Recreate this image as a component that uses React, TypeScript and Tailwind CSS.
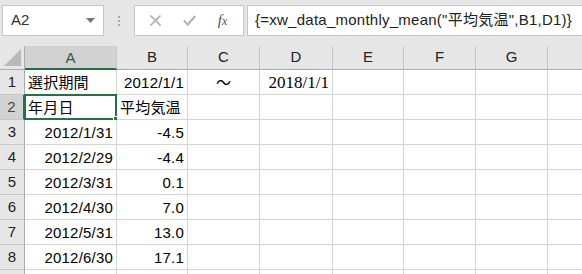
import React from "react";

const cols = [
  { name: "A", w: "w-[92px]" },
  { name: "B", w: "w-[71px]" },
  { name: "C", w: "w-[72px]" },
  { name: "D", w: "w-[73px]" },
  { name: "E", w: "w-[71px]" },
  { name: "F", w: "w-[72px]" },
  { name: "G", w: "w-[72px]" },
  { name: "H", w: "w-[80px]" },
];

type Cell = { text: string; align?: "left" | "right" | "center"; serif?: boolean };

const rows: Cell[][] = [
  [{ text: "選択期間" }, { text: "2012/1/1", align: "right" }, { text: "〜", align: "center" }, { text: "2018/1/1", align: "right", serif: true }],
  [{ text: "年月日" }, { text: "平均気温" }],
  [{ text: "2012/1/31", align: "right" }, { text: "-4.5", align: "right" }],
  [{ text: "2012/2/29", align: "right" }, { text: "-4.4", align: "right" }],
  [{ text: "2012/3/31", align: "right" }, { text: "0.1", align: "right" }],
  [{ text: "2012/4/30", align: "right" }, { text: "7.0", align: "right" }],
  [{ text: "2012/5/31", align: "right" }, { text: "13.0", align: "right" }],
  [{ text: "2012/6/30", align: "right" }, { text: "17.1", align: "right" }],
  [],
];

const font = { fontFamily: '"Liberation Sans", "Noto Sans CJK JP", sans-serif' };

export default function App() {
  return (
    <div className="w-[582px] h-[274px] overflow-hidden bg-[#e6e6e6] text-[15px] text-black" style={font}>
      {/* formula bar */}
      <div className="flex items-start pt-[5px] h-[46px]">
        <div className="ml-[2px] w-[102px] h-[31px] bg-white border border-[#c6c6c6] flex items-center justify-between pl-[8px] pr-[8px]">
          <span className="text-[#333]">A2</span>
          <svg width="9" height="5" viewBox="0 0 9 5">
            <path d="M0 0 H9 L4.5 5 Z" fill="#777" />
          </svg>
        </div>
        <div className="w-[30px] h-[31px] flex flex-col items-center justify-center gap-[2px]">
          <span className="w-[2px] h-[2px] bg-[#a8a8a8]" />
          <span className="w-[2px] h-[2px] bg-[#a8a8a8]" />
          <span className="w-[2px] h-[2px] bg-[#a8a8a8]" />
        </div>
        <div className="w-[110px] h-[31px] bg-white border border-[#c6c6c6] flex items-center">
          <div className="w-[38px] flex justify-center pl-[2px]">
            <svg width="11" height="11" viewBox="0 0 11 11">
              <path d="M0.5 0.5 L10.5 10.5 M10.5 0.5 L0.5 10.5" stroke="#b0b0b0" strokeWidth="1.6" />
            </svg>
          </div>
          <div className="w-[32px] flex justify-center">
            <svg width="13" height="11" viewBox="0 0 13 11">
              <path d="M0.8 5.5 L4.8 9.6 L12.2 1" stroke="#b0b0b0" strokeWidth="2" fill="none" />
            </svg>
          </div>
          <div className="flex-1 flex justify-center pr-[3px]">
            <span className="italic text-[15px] text-[#555]" style={{ fontFamily: '"Liberation Serif", serif' }}>
              f<span className="text-[12px]">x</span>
            </span>
          </div>
        </div>
        <div className="ml-[3px] flex-1 h-[31px] bg-white border border-r-0 border-[#c6c6c6] flex items-center pl-[7px] text-[#222] whitespace-nowrap tracking-[0.25px]">
          {'{=xw_data_monthly_mean("平均気温",B1,D1)}'}
        </div>
      </div>

      {/* column headers */}
      <div className="flex h-[24px]">
        <div className="w-[25px] shrink-0 border-r border-b border-[#ababab] relative">
          <svg className="absolute right-[3px] bottom-[3px]" width="17" height="17" viewBox="0 0 17 17">
            <path d="M17 0 V17 H0 Z" fill="#b9b9b9" />
          </svg>
        </div>
        {cols.map((c, i) => (
          <div
            key={c.name}
            className={`${c.w} shrink-0 flex items-center justify-center border-r border-[#c6c6c6] ${
              i === 0 ? "bg-[#d2d2d2] border-b-2 border-b-[#217346] text-[#1e5f3b]" : "border-b border-b-[#ababab] text-[#222]"
            }`}
          >
            <span className={i === 0 ? "pt-[2px]" : ""}>{c.name}</span>
          </div>
        ))}
      </div>

      {/* rows */}
      {rows.map((r, ri) => (
        <div key={ri} className="flex h-[25px]">
          <div
            className={`w-[25px] shrink-0 flex items-center justify-center border-r border-b ${
              ri === 1 ? "bg-[#d2d2d2] border-r-2 border-r-[#217346] text-[#444] border-b-[#c6c6c6]" : "border-r-[#ababab] border-b-[#c6c6c6] text-[#222]"
            }`}
          >
            <span className="pt-[1px]">{ri + 1}</span>
          </div>
          {cols.map((c, ci) => {
            const cell = r[ci];
            const align =
              cell?.align === "right" ? "justify-end pr-[3px]" : cell?.align === "center" ? "justify-center" : "justify-start pl-[3px]";
            return (
              <div
                key={c.name}
                className={`${c.w} shrink-0 bg-white border-r border-b border-[#d4d4d4] flex items-center ${align} whitespace-nowrap overflow-visible relative`}
              >
                {cell && (
                  <span
                    className={cell.serif ? "pt-[2px] text-[17px]" : "pt-[2px] tracking-[0.2px]"}
                    style={cell.serif ? { fontFamily: '"Liberation Serif", serif' } : undefined}
                  >
                    {cell.text}
                  </span>
                )}
                {ri === 1 && ci === 0 && (
                  <>
                    <div className="absolute left-[-1px] top-[-1px] w-[93px] h-[26px] border-2 border-[#217346] pointer-events-none" />
                    <div className="absolute right-[-4px] bottom-[-4px] w-[7px] h-[7px] bg-[#217346] border border-white" />
                  </>
                )}
              </div>
            );
          })}
        </div>
      ))}
    </div>
  );
}
